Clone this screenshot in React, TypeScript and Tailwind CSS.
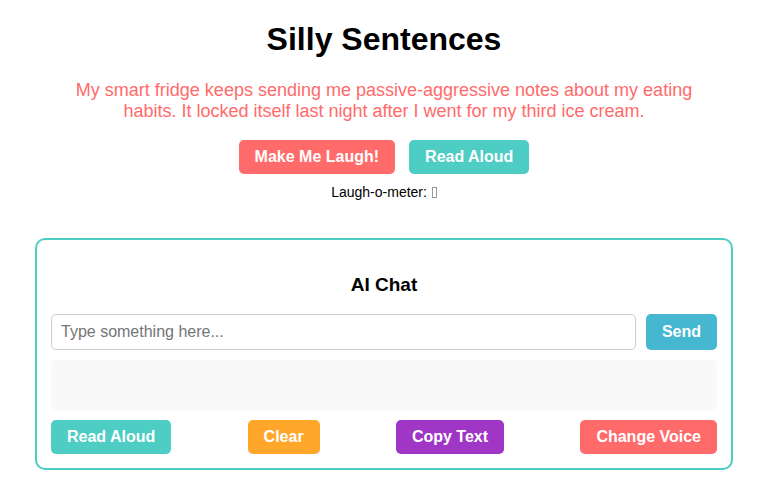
import React from "react";

export default function App() {
  return (
    <div className="min-h-[480px] bg-white text-black" style={{ fontFamily: '"Liberation Sans", Arial, sans-serif' }}>
      <div className="px-[35px] pt-[21px] flex flex-col items-center">
        <h1 className="text-[32px] leading-[37px] font-bold text-center">Silly Sentences</h1>
        <p className="mt-[22px] max-w-[640px] text-center text-[18px] leading-[21px] text-[#ff6b6b]">
          My smart fridge keeps sending me passive-aggressive notes about my eating habits. It locked itself last night after I went for my third ice cream.
        </p>
        <div className="mt-[18px] flex gap-[14px]">
          <button className="h-[34px] px-4 rounded-[5px] bg-[#ff6b6b] text-white font-bold text-[16px]">Make Me Laugh!</button>
          <button className="h-[34px] px-4 rounded-[5px] bg-[#4ecdc4] text-white font-bold text-[16px]">Read Aloud</button>
        </div>
        <div className="mt-[10px] text-[14px] leading-[16px] flex items-center">
          <span>Laugh-o-meter:&nbsp;</span>
          <span className="inline-block w-[5px] h-[11px] border border-[#999] ml-[1px]"></span>
        </div>
        <div className="mt-[38px] w-full border-2 border-[#4ecdc4] rounded-[10px] px-[14px] pt-[16px] pb-[14px]">
          <h3 className="my-[18px] text-[19px] leading-[22px] font-bold text-center">AI Chat</h3>
          <div className="flex gap-[10px]">
            <input
              className="flex-1 h-[36px] border border-[#ccc] rounded-[5px] px-[9px] text-[16px] outline-none placeholder:text-[#757575]"
              placeholder="Type something here..."
            />
            <button className="h-[36px] w-[71px] rounded-[5px] bg-[#45b7d1] text-white font-bold text-[16px]">Send</button>
          </div>
          <div className="mt-[10px] h-[50px] rounded-[5px] bg-[#f9f9f9]"></div>
          <div className="mt-[10px] flex justify-between">
            <button className="h-[34px] px-4 rounded-[5px] bg-[#4ecdc4] text-white font-bold text-[16px]">Read Aloud</button>
            <button className="h-[34px] px-4 rounded-[5px] bg-[#ffa62b] text-white font-bold text-[16px]">Clear</button>
            <button className="h-[34px] px-4 rounded-[5px] bg-[#9f36c6] text-white font-bold text-[16px]">Copy Text</button>
            <button className="h-[34px] px-4 rounded-[5px] bg-[#ff6b6b] text-white font-bold text-[16px]">Change Voice</button>
          </div>
        </div>
      </div>
    </div>
  );
}
